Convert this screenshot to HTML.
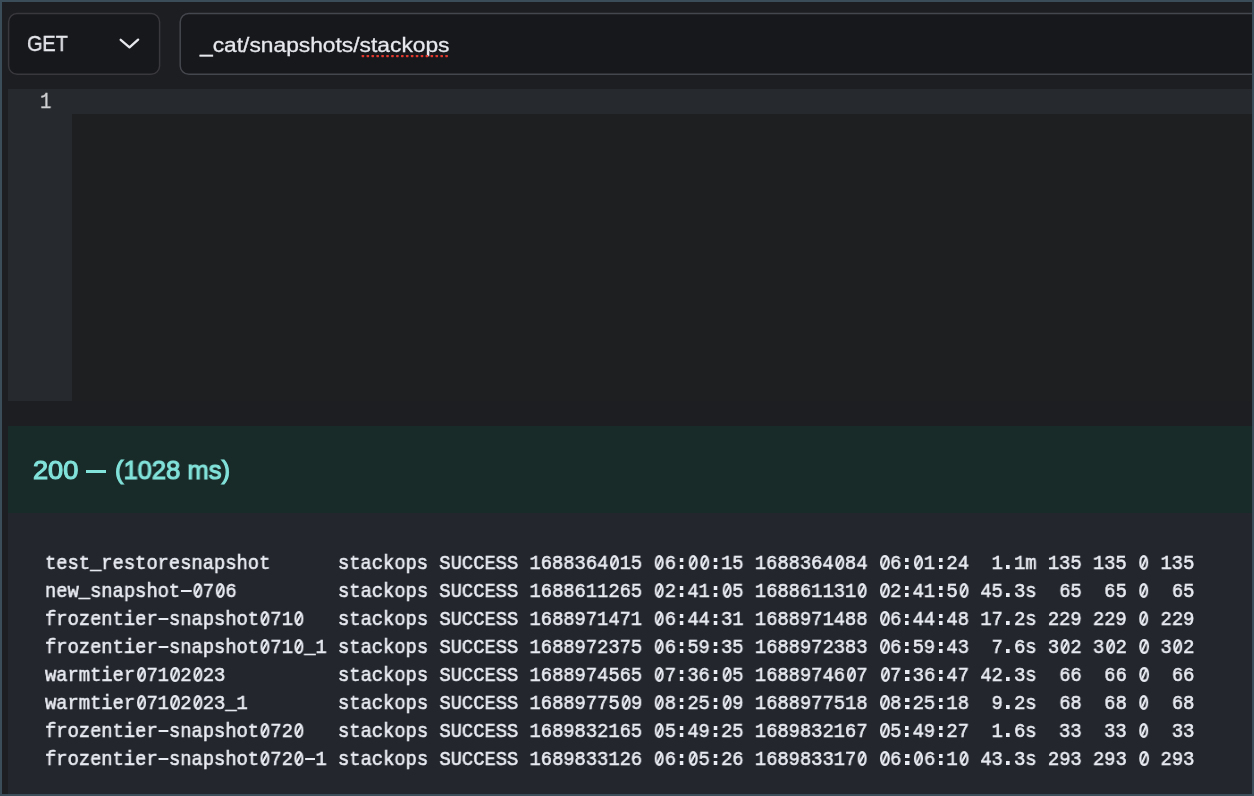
<!DOCTYPE html>
<html><head><meta charset="utf-8">
<style>
html,body{margin:0;padding:0;}
body{width:1254px;height:796px;overflow:hidden;background:#3c4d5a;position:relative;font-family:"Liberation Sans",sans-serif;}
#page{position:absolute;left:2px;top:2px;width:1250px;height:792px;background:#1d1e22;overflow:hidden;}
.a{position:absolute;}
.box{position:absolute;background:#17181c;border:2px solid #36373c;border-radius:9px;box-sizing:border-box;}
#method{left:8px;top:13px;width:153px;height:62px;border-color:#323338;}
#url{left:179px;top:13px;width:1100px;height:62px;border-color:#3a3c41;}
.t{position:absolute;will-change:transform;color:#e6e8ee;white-space:pre;line-height:1;}
#get{left:27px;top:33px;font-size:22px;transform:scaleX(0.905);transform-origin:0 0;-webkit-text-stroke:0.35px #e6e8ee;}
#urltext{left:200px;top:34px;font-size:21px;transform:scaleX(1.085);transform-origin:0 0;-webkit-text-stroke:0.3px #e6e8ee;}
#spell{left:361px;top:55px;}
#chev{left:118px;top:38px;}
#gutter{left:8px;top:89px;width:64px;height:312px;background:#26292d;}
#active{left:72px;top:89px;width:1180px;height:25px;background:#26292d;}
#editor{left:72px;top:114px;width:1180px;height:287px;background:#1d1f21;}
#ln{left:40px;top:92px;font-size:22px;transform:scaleX(0.86);transform-origin:0 0;-webkit-text-stroke:0.35px #cfd0d2;color:#cfd0d2;font-family:"Liberation Mono",monospace;}
#status{left:8px;top:426px;width:1244px;height:87px;background:#192b28;}
.st{position:absolute;will-change:transform;color:#82e3db;white-space:pre;line-height:1;font-size:26px;top:457px;-webkit-text-stroke:1.1px #82e3db;transform-origin:0 0;}
#dash{left:86px;top:470px;width:20px;height:2.6px;background:#82e3db;}
#resp{left:8px;top:513px;width:1244px;height:281px;background:#23262c;}
#pre{will-change:transform;left:45.4px;top:549.5px;margin:0;font-family:"Liberation Mono",monospace;font-size:21px;line-height:28.0px;color:#e9ebf2;white-space:pre;transform:scale(0.894,1.0);transform-origin:0 0;-webkit-text-stroke:0.6px #e9ebf2;}
#pre i{font-style:normal;position:relative;}
#pre i.h,#pre i.c,#pre i.d{color:transparent;-webkit-text-stroke-color:transparent;}
#pre i.c::before,#pre i.c::after{content:"";position:absolute;left:4.5px;width:4.1px;height:3.9px;background:#e9ebf2;}
#pre i.c::before{top:6.2px;}
#pre i.c::after{top:13.4px;}
#pre i.d::after{content:"";position:absolute;left:3.3px;width:4.8px;height:3.9px;top:13.4px;background:#e9ebf2;}
#pre i.h::after{content:"";position:absolute;left:0.7px;width:11.6px;top:10.45px;height:1.9px;background:#e9ebf2;}
#pre i.z{color:transparent;-webkit-text-stroke-color:transparent;}
#pre i.z::before{content:"";position:absolute;left:1.8px;width:10.1px;top:3.3px;height:14.3px;box-sizing:border-box;box-shadow:inset 0 0 0 2.45px #e9ebf2;border-radius:50%;}
#pre i.z::after{content:"";position:absolute;left:4.0px;width:5.8px;top:5.2px;height:9.9px;background:linear-gradient(to bottom right,transparent calc(50% - 1.5px),#e9ebf2 calc(50% - 0.7px),#e9ebf2 calc(50% + 0.7px),transparent calc(50% + 1.5px));}
</style></head><body>
<div id="page"></div>
<svg class="a" style="left:0;top:0" width="1252" height="90"><rect x="8.6" y="13.6" width="151" height="60.6" rx="8.5" fill="#17181c" stroke="#38383d" stroke-width="1.5"/><rect x="180.2" y="13.6" width="1200" height="60.6" rx="8.5" fill="#17181c" stroke="#45474e" stroke-width="1.5"/></svg>
<div class="t" id="get">GET</div>
<svg class="a" id="chev" width="22" height="14" viewBox="0 0 22 14"><path d="M2.7 1.8 L11.5 9.3 L20.1 1.6" fill="none" stroke="#e6e8ee" stroke-width="2.3" stroke-linecap="round" stroke-linejoin="round"/></svg>
<div class="t" id="urltext">_cat/snapshots/stackops</div>
<svg class="a" id="spell" width="92" height="3" viewBox="0 0 92 3"><rect x="0.60" y="0" width="2.6" height="2.2" rx="0.6" fill="#e2392f"/><rect x="5.52" y="0" width="2.6" height="2.2" rx="0.6" fill="#e2392f"/><rect x="10.45" y="0" width="2.6" height="2.2" rx="0.6" fill="#e2392f"/><rect x="15.37" y="0" width="2.6" height="2.2" rx="0.6" fill="#e2392f"/><rect x="20.30" y="0" width="2.6" height="2.2" rx="0.6" fill="#e2392f"/><rect x="25.23" y="0" width="2.6" height="2.2" rx="0.6" fill="#e2392f"/><rect x="30.15" y="0" width="2.6" height="2.2" rx="0.6" fill="#e2392f"/><rect x="35.08" y="0" width="2.6" height="2.2" rx="0.6" fill="#e2392f"/><rect x="40.00" y="0" width="2.6" height="2.2" rx="0.6" fill="#e2392f"/><rect x="44.92" y="0" width="2.6" height="2.2" rx="0.6" fill="#e2392f"/><rect x="49.85" y="0" width="2.6" height="2.2" rx="0.6" fill="#e2392f"/><rect x="54.77" y="0" width="2.6" height="2.2" rx="0.6" fill="#e2392f"/><rect x="59.70" y="0" width="2.6" height="2.2" rx="0.6" fill="#e2392f"/><rect x="64.62" y="0" width="2.6" height="2.2" rx="0.6" fill="#e2392f"/><rect x="69.55" y="0" width="2.6" height="2.2" rx="0.6" fill="#e2392f"/><rect x="74.47" y="0" width="2.6" height="2.2" rx="0.6" fill="#e2392f"/><rect x="79.40" y="0" width="2.6" height="2.2" rx="0.6" fill="#e2392f"/><rect x="84.32" y="0" width="2.6" height="2.2" rx="0.6" fill="#e2392f"/></svg>
<div class="a" id="gutter"></div>
<div class="a" id="active"></div>
<div class="a" id="editor"></div>
<div class="t" id="ln">1</div>
<div class="a" id="status"></div>
<div class="st" id="s1" style="left:33px;transform:scaleX(1.045)">200</div>
<div class="a" id="dash"></div>
<div class="st" id="s2" style="left:115px;transform:scaleX(0.982)">(1028 ms)</div>
<div class="a" id="resp"></div>
<pre class="a" id="pre">test_restoresnapshot      stackops SUCCESS 1688364<i class="z">0</i>15 <i class="z">0</i>6<i class="c">:</i><i class="z">0</i><i class="z">0</i><i class="c">:</i>15 1688364<i class="z">0</i>84 <i class="z">0</i>6<i class="c">:</i><i class="z">0</i>1<i class="c">:</i>24  1<i class="d">.</i>1m 135 135 <i class="z">0</i> 135
new_snapshot<i class="h">-</i><i class="z">0</i>7<i class="z">0</i>6         stackops SUCCESS 1688611265 <i class="z">0</i>2<i class="c">:</i>41<i class="c">:</i><i class="z">0</i>5 168861131<i class="z">0</i> <i class="z">0</i>2<i class="c">:</i>41<i class="c">:</i>5<i class="z">0</i> 45<i class="d">.</i>3s  65  65 <i class="z">0</i>  65
frozentier<i class="h">-</i>snapshot<i class="z">0</i>71<i class="z">0</i>   stackops SUCCESS 1688971471 <i class="z">0</i>6<i class="c">:</i>44<i class="c">:</i>31 1688971488 <i class="z">0</i>6<i class="c">:</i>44<i class="c">:</i>48 17<i class="d">.</i>2s 229 229 <i class="z">0</i> 229
frozentier<i class="h">-</i>snapshot<i class="z">0</i>71<i class="z">0</i>_1 stackops SUCCESS 1688972375 <i class="z">0</i>6<i class="c">:</i>59<i class="c">:</i>35 1688972383 <i class="z">0</i>6<i class="c">:</i>59<i class="c">:</i>43  7<i class="d">.</i>6s 3<i class="z">0</i>2 3<i class="z">0</i>2 <i class="z">0</i> 3<i class="z">0</i>2
warmtier<i class="z">0</i>71<i class="z">0</i>2<i class="z">0</i>23          stackops SUCCESS 1688974565 <i class="z">0</i>7<i class="c">:</i>36<i class="c">:</i><i class="z">0</i>5 16889746<i class="z">0</i>7 <i class="z">0</i>7<i class="c">:</i>36<i class="c">:</i>47 42<i class="d">.</i>3s  66  66 <i class="z">0</i>  66
warmtier<i class="z">0</i>71<i class="z">0</i>2<i class="z">0</i>23_1        stackops SUCCESS 16889775<i class="z">0</i>9 <i class="z">0</i>8<i class="c">:</i>25<i class="c">:</i><i class="z">0</i>9 1688977518 <i class="z">0</i>8<i class="c">:</i>25<i class="c">:</i>18  9<i class="d">.</i>2s  68  68 <i class="z">0</i>  68
frozentier<i class="h">-</i>snapshot<i class="z">0</i>72<i class="z">0</i>   stackops SUCCESS 1689832165 <i class="z">0</i>5<i class="c">:</i>49<i class="c">:</i>25 1689832167 <i class="z">0</i>5<i class="c">:</i>49<i class="c">:</i>27  1<i class="d">.</i>6s  33  33 <i class="z">0</i>  33
frozentier<i class="h">-</i>snapshot<i class="z">0</i>72<i class="z">0</i><i class="h">-</i>1 stackops SUCCESS 1689833126 <i class="z">0</i>6<i class="c">:</i><i class="z">0</i>5<i class="c">:</i>26 168983317<i class="z">0</i> <i class="z">0</i>6<i class="c">:</i><i class="z">0</i>6<i class="c">:</i>1<i class="z">0</i> 43<i class="d">.</i>3s 293 293 <i class="z">0</i> 293</pre>
</body></html>
